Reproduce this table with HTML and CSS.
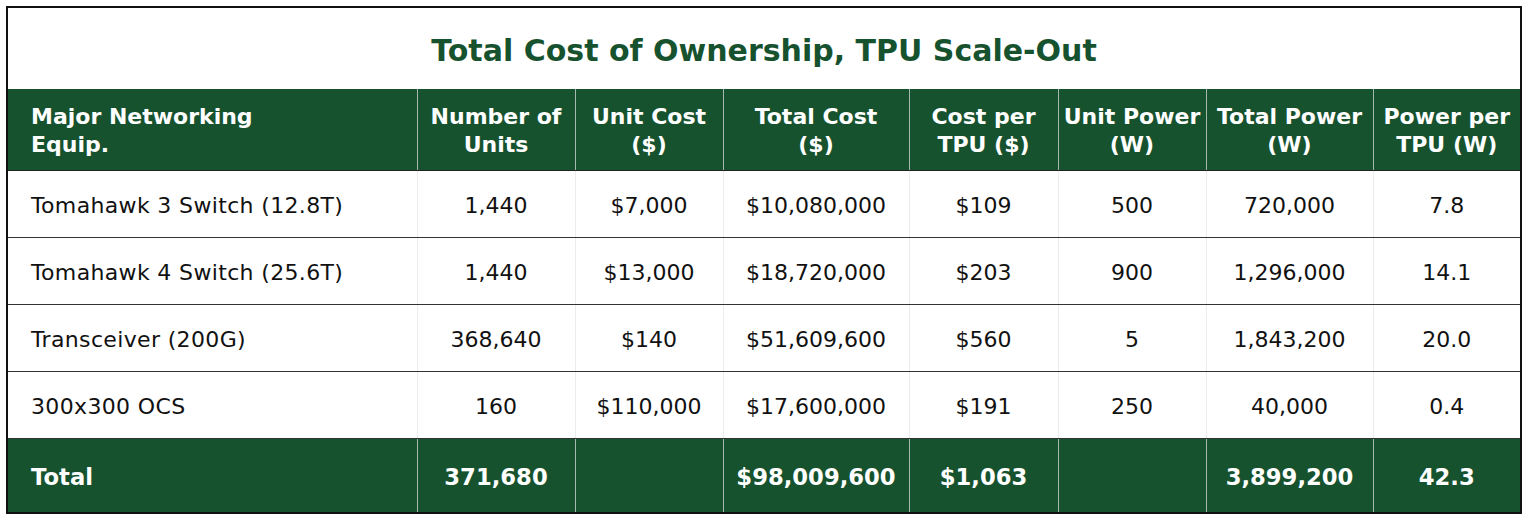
FILE: index.html
```html
<!DOCTYPE html>
<html>
<head>
<meta charset="utf-8">
<link rel="stylesheet" href="styles.css">
</head>
<body>
<div class="frame">
  <div class="title">Total Cost of Ownership, TPU Scale-Out</div>
  <table class="tco">
    <colgroup>
      <col class="c1"><col class="c2"><col class="c3"><col class="c4"><col class="c5"><col class="c6"><col class="c7"><col class="c8">
    </colgroup>
    <thead>
      <tr class="head">
        <th class="first">Major Networking<br>Equip.</th>
        <th>Number of<br>Units</th>
        <th>Unit Cost<br>($)</th>
        <th>Total Cost<br>($)</th>
        <th>Cost per<br>TPU ($)</th>
        <th>Unit Power<br>(W)</th>
        <th>Total Power<br>(W)</th>
        <th>Power per<br>TPU (W)</th>
      </tr>
    </thead>
    <tbody>
      <tr class="row">
        <td class="first">Tomahawk 3 Switch (12.8T)</td>
        <td>1,440</td><td>$7,000</td><td>$10,080,000</td><td>$109</td><td>500</td><td>720,000</td><td>7.8</td>
      </tr>
      <tr class="row">
        <td class="first">Tomahawk 4 Switch (25.6T)</td>
        <td>1,440</td><td>$13,000</td><td>$18,720,000</td><td>$203</td><td>900</td><td>1,296,000</td><td>14.1</td>
      </tr>
      <tr class="row">
        <td class="first">Transceiver (200G)</td>
        <td>368,640</td><td>$140</td><td>$51,609,600</td><td>$560</td><td>5</td><td>1,843,200</td><td>20.0</td>
      </tr>
      <tr class="row">
        <td class="first">300x300 OCS</td>
        <td>160</td><td>$110,000</td><td>$17,600,000</td><td>$191</td><td>250</td><td>40,000</td><td>0.4</td>
      </tr>
      <tr class="total">
        <td class="first">Total</td>
        <td>371,680</td><td></td><td>$98,009,600</td><td>$1,063</td><td></td><td>3,899,200</td><td>42.3</td>
      </tr>
    </tbody>
  </table>
</div>
</body>
</html>
```
FILE: styles.css
```css
html, body {
  margin: 0;
  padding: 0;
  background: #ffffff;
}
body {
  padding: 6px 6px 0 6px;
  font-family: "DejaVu Sans", sans-serif;
}
.frame {
  width: 1512px;
  border: 2px solid #111;
  background: #fff;
}
.title {
  height: 81px;
  display: flex;
  align-items: center;
  justify-content: center;
  color: #17522f;
  font-weight: bold;
  font-size: 30px;
  padding-top: 3px;
  box-sizing: border-box;
}
.tco {
  width: 1512px;
  border-collapse: collapse;
  table-layout: fixed;
}
.c1 { width: 409px; }
.c2 { width: 158px; }
.c3 { width: 148px; }
.c4 { width: 186px; }
.c5 { width: 149px; }
.c6 { width: 148px; }
.c7 { width: 167px; }
.c8 { width: 147px; }
.tco th, .tco td {
  text-align: center;
  padding: 0 2px;
  white-space: nowrap;
}
.tco th:first-child, .tco td:first-child {
  text-align: left;
  padding-left: 23px;
}
.head th {
  background: #17522f;
  color: #fff;
  font-weight: bold;
  font-size: 22px;
  line-height: 28px;
  height: 81px;
  padding-top: 3px;
  border-left: 1px solid #a9b8ae;
  border-bottom: 1px solid #222;
  box-sizing: border-box;
}
.head th:first-child { border-left: none; }
.row td {
  color: #111;
  font-size: 22px;
  height: 67px;
  padding-top: 3px;
  border-left: 1px solid #ececec;
  border-bottom: 1px solid #333;
  box-sizing: border-box;
}
.row td.first { letter-spacing: 0.35px; }
.row td:first-child { border-left: none; }
.total td {
  background: #17522f;
  color: #fff;
  font-weight: bold;
  font-size: 22.7px;
  height: 74px;
  padding-top: 3px;
  border-left: 1px solid #a9b8ae;
  box-sizing: border-box;
}
.total td:first-child { border-left: none; }
```
